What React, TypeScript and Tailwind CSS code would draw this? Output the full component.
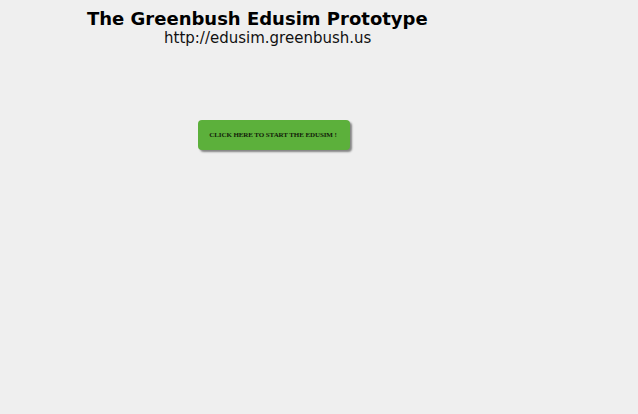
export default function App() {
  return (
    <div className="h-[414px] w-[638px] overflow-hidden bg-[#efefef]">
      <header className="pl-[87px] pt-[8px]">
        <h1 className="whitespace-nowrap font-['DejaVu_Sans',sans-serif] text-[18px] font-bold leading-[22px] text-black">
          The Greenbush Edusim Prototype
        </h1>
        <p className="ml-[77px] whitespace-nowrap font-['DejaVu_Sans',sans-serif] text-[15px] font-medium leading-[17px] text-[#111]">
          http://edusim.greenbush.us
        </p>
      </header>

      <div className="pl-[198px] pt-[73px]">
        <button className="flex h-[30px] w-[152px] items-center justify-center rounded-[4px] bg-[#5cb03b] pr-[2px] font-['Liberation_Serif',serif] text-[7px] font-bold uppercase tracking-[-0.1px] text-[#122008] shadow-[2px_2px_2px_rgba(0,0,0,0.45)]">
          Click here to start the Edusim !
        </button>
      </div>
    </div>
  );
}
